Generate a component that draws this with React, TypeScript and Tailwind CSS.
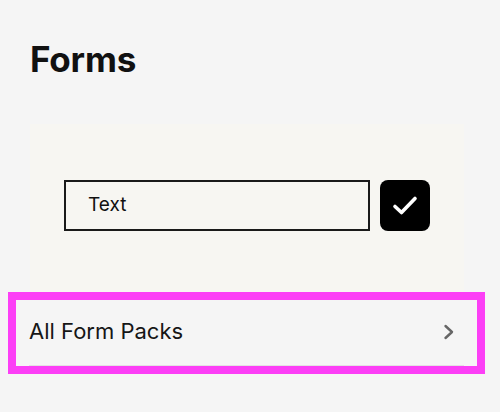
import React from "react";

export default function App() {
  return (
    <div className="w-[500px] h-[412px] bg-[#f5f5f5] overflow-hidden font-['Inter',sans-serif] text-[#111]">
      <div className="pl-[30px] pt-[37px] h-[124px]">
        <h1 className="text-[35px] leading-[44px] font-bold tracking-[-0.2px]">Forms</h1>
      </div>
      <div className="ml-[30px] w-[434px] h-[168px] bg-[#f7f6f2] flex items-start pt-[56px] pl-[34px] gap-[10px]">
        <div className="w-[306px] h-[51px] border-2 border-[#1a1a1a] flex items-center pl-[22px] text-[19px]">
          Text
        </div>
        <div className="w-[50px] h-[51px] rounded-[8px] bg-black flex items-center justify-center">
          <svg width="26" height="26" viewBox="0 0 26 26" fill="none">
            <path d="M3 13.5 L9.5 19.5 L23 5.5" stroke="white" strokeWidth="3.6" strokeLinecap="round" strokeLinejoin="round" />
          </svg>
        </div>
      </div>
      <div className="ml-[8px] w-[477px] h-[82px] border-[8px] border-[#fc3ff6]">
        <div className="h-full mx-[13px] border-b border-[#e2e2e2] flex items-center justify-between pr-[9px]">
          <span className="text-[22px] text-[#161616] -mt-[2px]">All Form Packs</span>
          <svg width="12" height="16" viewBox="0 0 12 16" fill="none" className="-mt-[2px]">
            <path d="M2.5 2 L9 8 L2.5 14" stroke="#666" strokeWidth="2.4" strokeLinecap="round" strokeLinejoin="round" />
          </svg>
        </div>
      </div>
    </div>
  );
}
